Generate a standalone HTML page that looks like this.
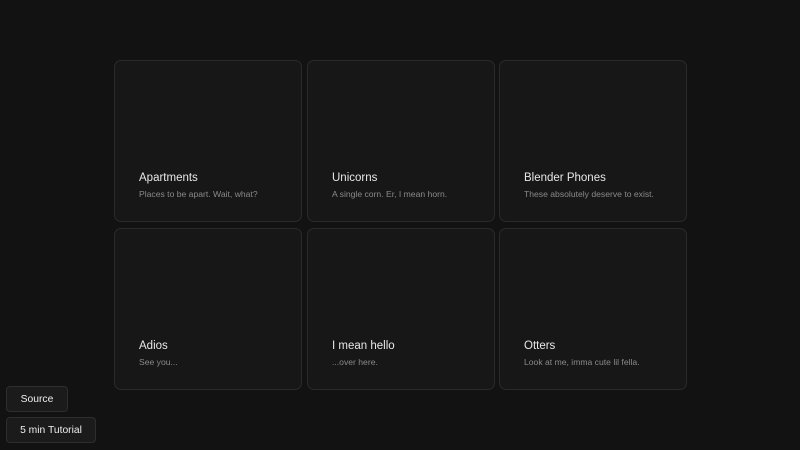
<!DOCTYPE html>
<html><head><style>
body{margin:0;width:800px;height:450px;background:#121212;font-family:"Liberation Sans",sans-serif;position:relative;overflow:hidden}
.card{position:absolute;width:188px;height:162px;border:1px solid #2a2a2a;border-radius:7px;background:#171717;box-sizing:border-box}
.t{position:absolute;left:24px;top:111px;color:#e8e8e8;font-size:11.5px}
.d{position:absolute;left:24px;top:128px;color:#8a8a8a;font-size:8.6px}
.btn{position:absolute;left:6px;height:26px;border:1px solid #2e2e2e;border-radius:4px;background:#1b1b1b;color:#eee;font-size:10.3px;line-height:25px;box-sizing:border-box;text-align:center}
</style></head><body>
<div class="card" style="left:114px;top:60px"><div class="t">Apartments</div><div class="d">Places to be apart. Wait, what?</div></div>
<div class="card" style="left:307px;top:60px"><div class="t">Unicorns</div><div class="d">A single corn. Er, I mean horn.</div></div>
<div class="card" style="left:499px;top:60px"><div class="t">Blender Phones</div><div class="d">These absolutely deserve to exist.</div></div>
<div class="card" style="left:114px;top:228px"><div class="t">Adios</div><div class="d">See you...</div></div>
<div class="card" style="left:307px;top:228px"><div class="t">I mean hello</div><div class="d">...over here.</div></div>
<div class="card" style="left:499px;top:228px"><div class="t">Otters</div><div class="d">Look at me, imma cute lil fella.</div></div>
<div class="btn" style="top:386px;width:62px">Source</div>
<div class="btn" style="top:417px;width:90px">5 min Tutorial</div>
</body></html>
